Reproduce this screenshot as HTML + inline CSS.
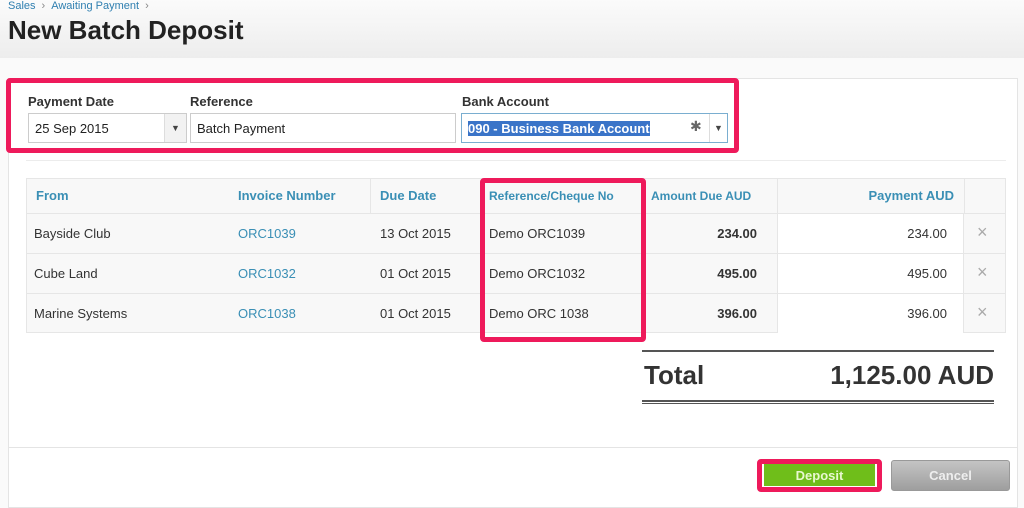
<!DOCTYPE html>
<html><head><style>
*{margin:0;padding:0;box-sizing:border-box}
body{width:1024px;height:504px;overflow:hidden;background:#fafafa;font-family:"Liberation Sans",Arial,sans-serif;position:relative;color:#333}
.hdr{position:absolute;left:0;top:0;width:1024px;height:58px;background:linear-gradient(#fbfbfb,#ededed)}
.crumb{position:absolute;left:8px;top:0;font-size:11px;color:#2f7fb0}
.crumb span{color:#888;margin:0 6px}
h1{position:absolute;left:8px;top:15px;font-size:26px;font-weight:bold;color:#222}
.panel{position:absolute;left:8px;top:78px;width:1010px;height:430px;background:#fff;border:1px solid #e4e4e4}
.abs{position:absolute}
.red{position:absolute;border:5px solid #ee1a5b;border-radius:4px}
.lbl{position:absolute;font-size:13px;font-weight:bold;color:#333}
.inp{position:absolute;height:30px;border:1px solid #ccc;background:#fff;font-size:13px;padding:7px 6px;color:#222}
.tbl{position:absolute;left:26px;top:178px;width:980px;height:155px;border:1px solid #e6e6e6;background:#f8f8f8}
.th{position:absolute;top:0;height:34px;font-size:13px;font-weight:bold;color:#3a8fb5;padding-top:9px}
.row{position:absolute;left:0;width:978px;height:40px;border-top:1px solid #e6e6e6}
.c{position:absolute;top:12px;font-size:13px;color:#333}
.pay{position:absolute;left:750px;top:0;width:187px;height:39px;background:#fff;border-left:1px solid #e6e6e6;border-right:1px solid #e6e6e6}
.x{position:absolute;left:950px;top:8px;font-size:18px;color:#aaa}
</style></head><body>
<div class="hdr"></div>
<div class="crumb">Sales<span>›</span>Awaiting Payment<span>›</span></div>
<h1>New Batch Deposit</h1>
<div class="panel"></div>
<div class="abs" style="left:26px;top:160px;width:980px;height:1px;background:#ececec"></div>
<div class="lbl" style="left:28px;top:94px">Payment Date</div>
<div class="lbl" style="left:190px;top:94px">Reference</div>
<div class="lbl" style="left:462px;top:94px">Bank Account</div>
<div class="inp" style="left:28px;top:113px;width:159px">25 Sep 2015</div>
<div class="abs" style="left:164px;top:114px;width:22px;height:28px;background:#f2f2f2;border-left:1px solid #ddd;font-size:9px;color:#444;text-align:center;padding-top:9px">▼</div>
<div class="inp" style="left:190px;top:113px;width:266px">Batch Payment</div>
<div class="inp" style="left:461px;top:113px;width:267px;border-color:#7aaed0"><span style="background:#3a74c8;color:#fff;font-weight:bold">090 - Business Bank Account</span></div>
<div class="abs" style="left:690px;top:118px;font-size:14px;color:#666">✱</div>
<div class="abs" style="left:709px;top:114px;width:18px;height:28px;border-left:1px solid #ddd;font-size:9px;color:#444;text-align:center;padding-top:9px">▼</div>
<div class="red" style="left:6px;top:78px;width:733px;height:75px"></div>

<div class="tbl">
<div class="th" style="left:9px">From</div>
<div class="th" style="left:211px">Invoice Number</div>
<div class="abs" style="left:343px;top:0;width:1px;height:34px;background:#e6e6e6"></div>
<div class="th" style="left:353px">Due Date</div>
<div class="th" style="left:462px;font-size:12px;padding-top:10px">Reference/Cheque No</div>
<div class="th" style="left:624px;font-size:12px;padding-top:10px">Amount Due AUD</div>
<div class="abs" style="left:750px;top:0;width:1px;height:34px;background:#e6e6e6"></div>
<div class="th" style="left:750px;width:177px;text-align:right">Payment AUD</div>
<div class="abs" style="left:937px;top:0;width:1px;height:34px;background:#e6e6e6"></div>
<div class="row" style="top:34px"><div class="pay"></div><div class="c" style="left:7px">Bayside Club</div><div class="c" style="left:211px;color:#3a8fb5">ORC1039</div><div class="c" style="left:353px">13 Oct 2015</div><div class="c" style="left:462px">Demo ORC1039</div><div class="c" style="left:600px;width:130px;text-align:right;font-weight:bold">234.00</div><div class="c" style="left:750px;width:170px;text-align:right">234.00</div><div class="x">×</div></div>
<div class="row" style="top:74px"><div class="pay"></div><div class="c" style="left:7px">Cube Land</div><div class="c" style="left:211px;color:#3a8fb5">ORC1032</div><div class="c" style="left:353px">01 Oct 2015</div><div class="c" style="left:462px">Demo ORC1032</div><div class="c" style="left:600px;width:130px;text-align:right;font-weight:bold">495.00</div><div class="c" style="left:750px;width:170px;text-align:right">495.00</div><div class="x">×</div></div>
<div class="row" style="top:114px"><div class="pay"></div><div class="c" style="left:7px">Marine Systems</div><div class="c" style="left:211px;color:#3a8fb5">ORC1038</div><div class="c" style="left:353px">01 Oct 2015</div><div class="c" style="left:462px">Demo ORC 1038</div><div class="c" style="left:600px;width:130px;text-align:right;font-weight:bold">396.00</div><div class="c" style="left:750px;width:170px;text-align:right">396.00</div><div class="x">×</div></div>
</div>
<div class="red" style="left:480px;top:178px;width:166px;height:164px"></div>

<div class="abs" style="left:642px;top:350px;width:352px;height:2px;background:#555"></div>
<div class="abs" style="left:644px;top:360px;font-size:26px;font-weight:bold;color:#333">Total</div>
<div class="abs" style="left:760px;top:360px;width:234px;text-align:right;font-size:26px;font-weight:bold;color:#333">1,125.00 AUD</div>
<div class="abs" style="left:642px;top:400px;width:352px;height:4px;border-top:2px solid #555;border-bottom:1px solid #555"></div>

<div class="abs" style="left:8px;top:447px;width:1010px;height:1px;background:#e4e4e4"></div>
<div class="abs" style="left:764px;top:464px;width:111px;height:22px;background:#6fbe1a;color:#e8f8d0;font-weight:bold;font-size:13px;text-align:center;padding-top:4px">Deposit</div>
<div class="red" style="left:757px;top:459px;width:125px;height:33px"></div>
<div class="abs" style="left:891px;top:460px;width:119px;height:31px;background:linear-gradient(#c4c4c4,#9e9e9e);border:1px solid #999;border-radius:3px;color:#eee;font-weight:bold;font-size:13px;text-align:center;padding-top:7px">Cancel</div>
</body></html>
